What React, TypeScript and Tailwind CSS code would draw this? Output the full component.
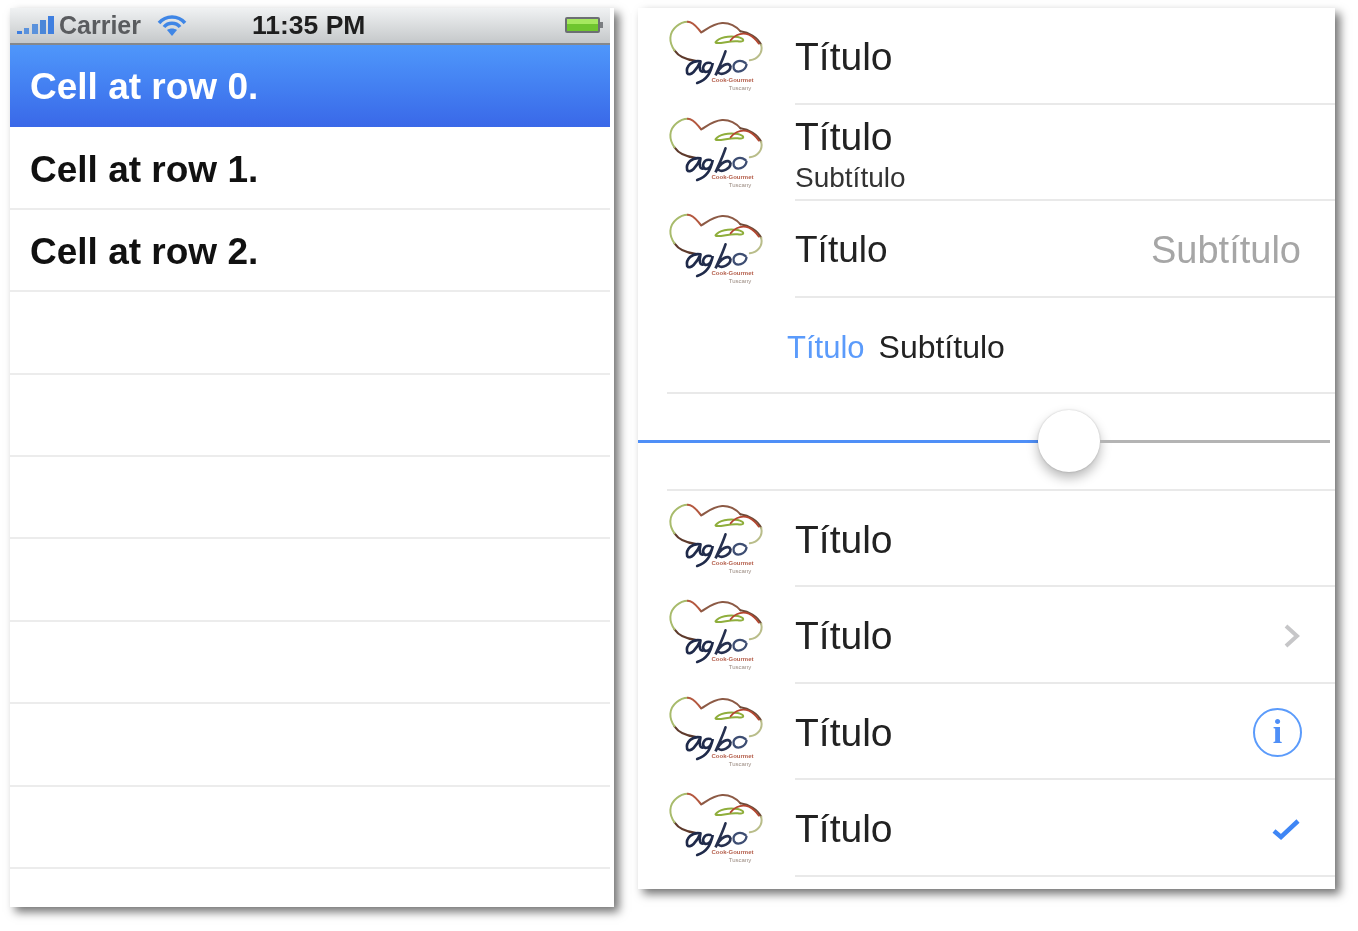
import React from 'react';

const LEFT_ROWS = 10;

// Logo del gorro: trazos sueltos, igual en todas las filas
function ChefLogo() {
  return (
    <svg width="97" height="75" viewBox="50 55 290 225" fill="none" strokeLinecap="round" className="shrink-0">
      <path d="M135 183 C105 180 84 170 72 152" stroke="#5e3a2c" strokeWidth="6" />
      <path d="M72 152 C55 128 54 100 78 80 C88 71 100 66 112 66" stroke="#a8bb6c" strokeWidth="6" />
      <path d="M112 66 C130 66 140 85 152 98" stroke="#b4583f" strokeWidth="6" />
      <path d="M152 98 C165 92 185 72 215 70 C240 69 255 78 270 95" stroke="#8c5a45" strokeWidth="6" />
      <path d="M270 95 C295 98 320 112 332 135" stroke="#6e4a38" strokeWidth="6" />
      <path d="M332 135 C338 160 322 178 298 182" stroke="#b9bd8a" strokeWidth="6" />
      <path d="M195 128 C205 112 235 108 262 112 C285 118 282 128 262 125 C240 122 215 132 197 130" stroke="#8fae3c" strokeWidth="6" />
      <path d="M240 122 C255 105 275 98 295 105 C310 112 318 122 325 132" stroke="#b4452f" strokeWidth="5" />
      <path d="M150 185 C125 180 105 200 110 220 C118 233 140 210 150 185 C145 205 148 220 160 215" stroke="#1f2a4a" strokeWidth="8" />
      <path d="M180 190 C160 185 150 210 165 217 C178 217 185 200 187 190 C180 220 170 240 140 250" stroke="#1f2a4a" strokeWidth="8" />
      <path d="M225 155 C215 185 200 215 195 227 C210 195 235 185 240 200 C240 217 215 227 205 220" stroke="#26304f" strokeWidth="8" />
      <path d="M285 190 C265 175 245 190 250 207 C258 223 285 215 288 195" stroke="#3d4d72" strokeWidth="7" />
      <text x="183" y="248" fontSize="18" fontWeight="700" fill="#b5604d" fontFamily="'Liberation Sans', sans-serif">Cook-Gourmet</text>
      <text x="235" y="272" fontSize="18" fill="#9a8a80" fontFamily="'Liberation Sans', sans-serif">Tuscany</text>
    </svg>
  );
}

function StatusBar() {
  return (
    <div className="h-[37px] flex items-center pl-[7px] pr-[6px] bg-gradient-to-b from-[#f0f2f3] to-[#c5c8ca] border-b-2 border-[#85888b] font-['Liberation_Sans',sans-serif] font-bold">
      <svg width="38" height="20" viewBox="0 0 38 20" className="shrink-0">
        <rect x="0" y="15" width="5" height="3" fill="#3f7fe0" />
        <rect x="7" y="12" width="5" height="6" fill="#5b92dc" />
        <rect x="15" y="8" width="6" height="10" fill="#5b92dc" />
        <rect x="23" y="4" width="6" height="14" fill="#4a86d8" />
        <rect x="31" y="0" width="6" height="18" fill="#3f7fe0" />
      </svg>
      <span className="ml-[4px] text-[25px] text-[#5a5c5f]">Carrier</span>
      <svg width="30" height="21" viewBox="0 0 30 21" fill="none" stroke="#3f86e6" strokeWidth="3.5" className="ml-[16px] shrink-0">
        <path d="M2 8 C9 0 21 0 28 8" />
        <path d="M7 12 C11 7 19 7 23 12" />
        <path d="M15 21 L10 15 C13 13 17 13 20 15 Z" fill="#3f86e6" stroke="none" />
      </svg>
      <span className="ml-[65px] text-[26.5px] text-[#1e1e1e]">11:35 PM</span>
      <svg width="40" height="19" viewBox="0 0 40 19" className="ml-auto shrink-0">
        <rect x="1" y="1" width="35" height="16" rx="2" fill="#6c6f73" />
        <rect x="36" y="6" width="3" height="6" fill="#7b7e82" />
        <rect x="3" y="3" width="31" height="12" fill="#6fc52e" />
        <rect x="3" y="3" width="31" height="5" fill="#a6e85f" />
      </svg>
    </div>
  );
}

function LeftPanel() {
  const rows = Array.from({ length: LEFT_ROWS }, (_, i) => i);
  return (
    <div className="relative w-[604px] h-[899px] shrink-0 bg-white shadow-[5px_5px_9px_rgba(0,0,0,0.55)] pr-[4px] overflow-hidden">
      <StatusBar />
      {rows.map((i) => (
        <div
          key={i}
          className={
            i === 0
              ? 'h-[82.4px] flex items-center pl-[20px] pt-[2px] text-white bg-gradient-to-b from-[#4f97fb] to-[#3a68e8] text-[37px] font-bold'
              : 'h-[82.4px] flex items-center pl-[20px] pt-[4px] text-[#111] border-b-2 border-[#ececec] text-[37px] font-bold'
          }
          style={{ fontFamily: "'Liberation Sans', sans-serif" }}
        >
          {i < 3 ? `Cell at row ${i}.` : ''}
        </div>
      ))}
    </div>
  );
}

function Row({ children, full, logo = true }: { children: React.ReactNode; full?: boolean; logo?: boolean }) {
  return (
    <div className={full ? 'h-[96.5px] pl-[29px]' : 'h-[96.5px] flex pl-[29px]'}>
      <div className={full ? 'h-full flex border-b-2 border-[#e9e9e9]' : 'contents'}>
        {logo && (
          <div className="w-[128px] shrink-0 pt-[10px]">
            <ChefLogo />
          </div>
        )}
        <div
          className={
            full
              ? 'flex-1 flex items-center'
              : 'flex-1 h-full flex items-center border-b-2 border-[#e9e9e9] pr-[34px] pt-[3px]'
          }
        >
          {children}
        </div>
      </div>
    </div>
  );
}

function RightPanel() {
  const title = 'text-[39px] text-[#222] leading-none';
  return (
    <div className="w-[697px] h-[881px] shrink-0 bg-white shadow-[5px_5px_9px_rgba(0,0,0,0.55)] font-['Liberation_Sans',sans-serif]">
      <Row>
        <span className={title}>Título</span>
      </Row>
      <Row>
        <div className="flex flex-col pt-[3px]">
          <span className={title}>Título</span>
          <span className="text-[28px] leading-none text-[#333] mt-[8px]">Subtítulo</span>
        </div>
      </Row>
      <Row>
        <span className="text-[37px] text-[#222] leading-none">Título</span>
        <span className="ml-auto text-[38px] text-[#a6a6a6] leading-none">Subtítulo</span>
      </Row>
      <Row full logo={false}>
        <div className="pl-[120px] pt-[5px] flex items-center gap-[14px]">
          <span className="text-[31px] text-[#5b9bfb] leading-none">Título</span>
          <span className="text-[32px] text-[#222] leading-none">Subtítulo</span>
        </div>
      </Row>
      <div className="h-[96.5px] flex flex-col">
        <div className="flex-1 flex items-center pr-[5px]">
          <div className="w-[400px] h-[3px] bg-[#4f8ff7]" />
          <div className="w-[62px] h-[62px] rounded-full bg-white shrink-0 shadow-[0_6px_12px_rgba(0,0,0,0.28),0_0_2px_rgba(0,0,0,0.2)]" />
          <div className="flex-1 h-[3px] bg-[#b4b4b4]" />
        </div>
        <div className="h-[2px] ml-[29px] bg-[#e9e9e9]" />
      </div>
      <Row>
        <span className={title}>Título</span>
      </Row>
      <Row>
        <span className={title}>Título</span>
        <svg width="20" height="28" viewBox="0 0 20 28" fill="none" stroke="#c6c6c8" strokeWidth="4" className="ml-auto mr-[-1px]">
          <path d="M4 4 L15 14 L4 24" />
        </svg>
      </Row>
      <Row>
        <span className={title}>Título</span>
        <div className="ml-auto mr-[-1px] w-[49px] h-[49px] rounded-full border-2 border-[#5b9bfb] flex items-center justify-center text-[#4f8ff7] text-[34px] font-bold font-['Liberation_Serif',serif] leading-none">
          i
        </div>
      </Row>
      <Row>
        <span className={title}>Título</span>
        <svg width="30" height="24" viewBox="0 0 30 24" fill="none" stroke="#3f86f5" strokeWidth="4.5" className="ml-auto mr-0 mt-[1px]">
          <path d="M3 14 L10 20 L27 4" />
        </svg>
      </Row>
    </div>
  );
}

export default function App() {
  return (
    <div className="w-[1358px] h-[931px] bg-white overflow-hidden flex items-start pl-[10px] pt-[8px] gap-[24px] blur-[0.7px]">
      <LeftPanel />
      <RightPanel />
    </div>
  );
}
